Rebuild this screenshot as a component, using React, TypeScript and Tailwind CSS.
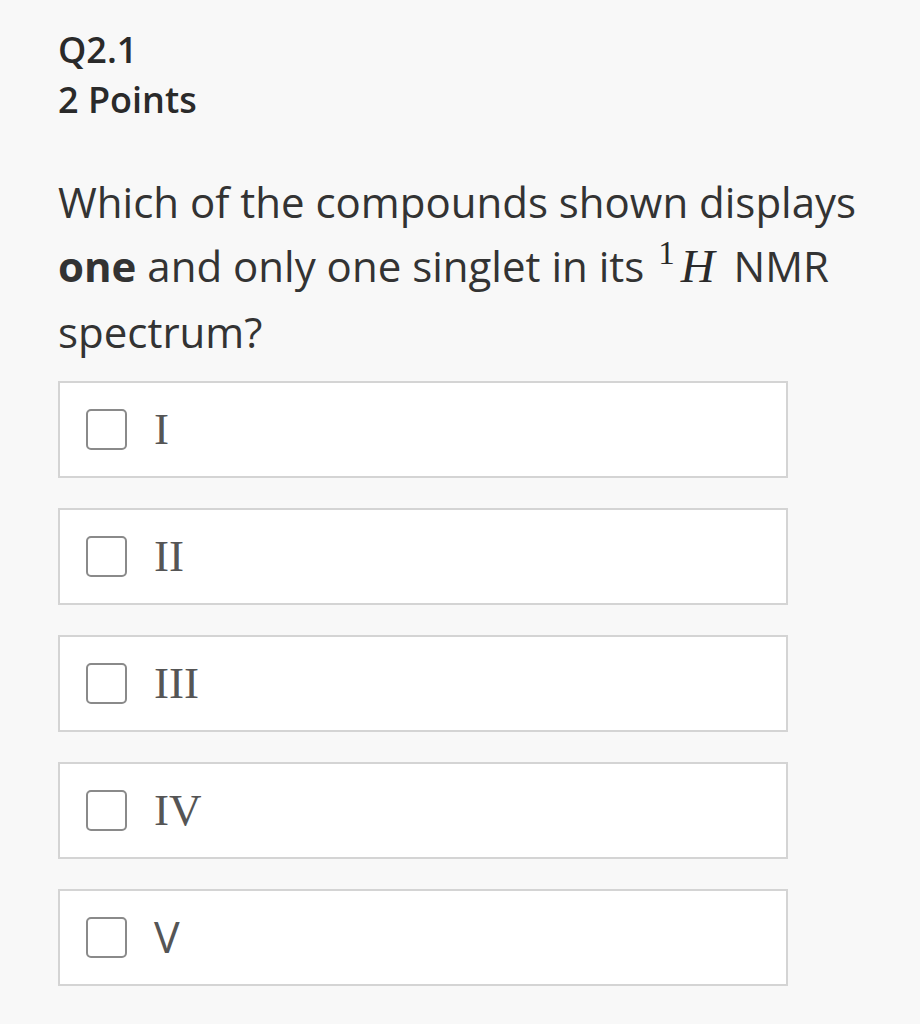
export default function App() {
  const options = ["I", "II", "III", "IV", "V"];

  return (
    <div className="min-h-screen bg-[#f8f8f8] px-[58px] pt-[25px] pb-[38px] font-['Open_Sans',sans-serif]">
      {/* Header */}
      <div className="text-[36px] leading-[50px] font-semibold text-[#2a2a2a]">
        <div>Q2.1</div>
        <div>2 Points</div>
      </div>

      {/* Question */}
      <p className="mt-[45px] w-[830px] text-[42px] leading-[64px] text-[#333]">
        Which of the compounds shown displays <span className="font-bold">one</span> and only one singlet in its{" "}
        <span className="font-['Liberation_Serif',serif] text-[#2a2a2a]">
          <sup className="relative top-[-18px] ml-[3px] text-[33px] leading-none">1</sup>
          <i className="ml-[6px] mr-[8px] text-[47px]">H</i>
        </span>{" "}
        NMR spectrum?
      </p>

      {/* Options */}
      <div className="mt-[17px] flex w-[730px] flex-col gap-[30px]">
        {options.map((o) => (
          <label
            key={o}
            className="flex h-[97px] items-center border-2 border-[#d4d4d4] bg-white pl-[26px]"
          >
            <span className="h-[41px] w-[41px] shrink-0 rounded-[5px] border-2 border-[#8a8a8a] bg-white" />
            <span
              className={
                o === "V"
                  ? "ml-[27px] text-[43px] text-[#555] font-['Open_Sans',sans-serif]"
                  : "ml-[27px] text-[45px] text-[#555] font-['Liberation_Serif',serif]"
              }
            >
              {o}
            </span>
          </label>
        ))}
      </div>
    </div>
  );
}
